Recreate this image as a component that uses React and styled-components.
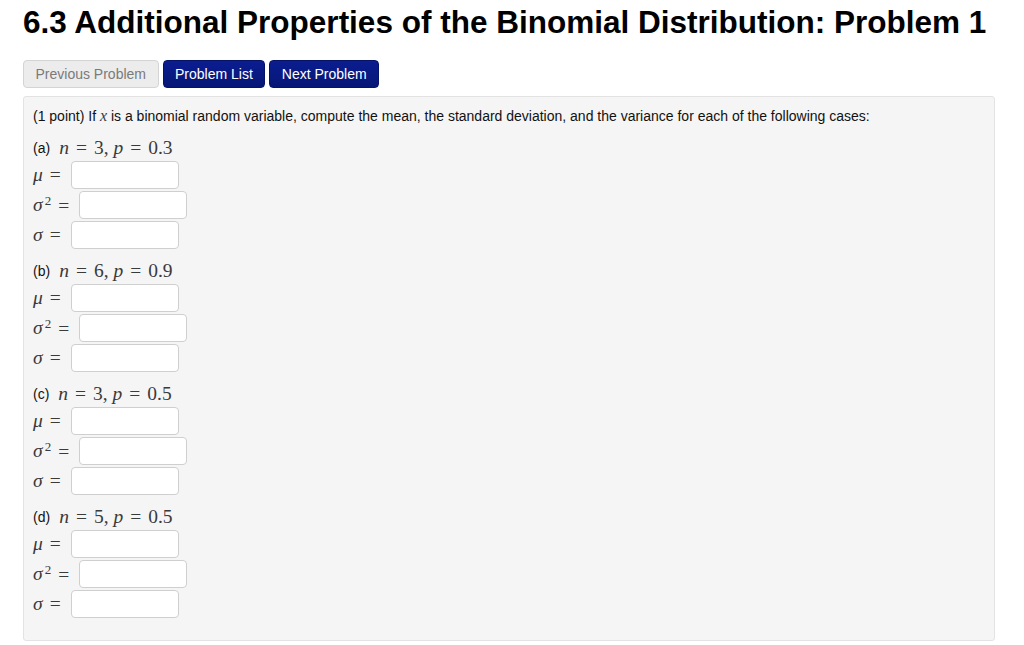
import React from "react";
import styled, { createGlobalStyle } from "styled-components";

const GlobalStyle = createGlobalStyle`
  body {
    margin: 0;
    background: #fff;
    font-family: "Liberation Sans", Arial, sans-serif;
    color: #111;
  }
`;

const Page = styled.div`
  padding: 0 29px 0 23px;
`;

const Title = styled.h1`
  margin: 0;
  padding-top: 4px;
  font-size: 31.5px;
  line-height: 36px;
  font-weight: bold;
  color: #000;
  white-space: nowrap;
`;

const Nav = styled.div`
  display: flex;
  gap: 4px;
  margin-top: 20px;
`;

const NavButton = styled.button`
  height: 28px;
  padding: 0 11.5px;
  font-family: "Liberation Sans", Arial, sans-serif;
  font-size: 14px;
  border-radius: 4px;
  border: 1px solid ${(p) => (p.$primary ? "#051268" : "#d4d4d4")};
  background: ${(p) =>
    p.$primary ? "linear-gradient(#0b1d90, #061676)" : "#ececec"};
  color: ${(p) => (p.$primary ? "#fff" : "#7a7a7a")};
`;

const Panel = styled.div`
  margin-top: 8px;
  background: #f5f5f5;
  border: 1px solid #e3e3e3;
  border-radius: 3px;
  padding: 7px 9px 11px;
  height: 545px;
  box-sizing: border-box;
`;

const Intro = styled.div`
  font-size: 14px;
  line-height: 24px;
  margin-bottom: 8px;
`;

const MathVar = styled.span`
  font-family: "Liberation Serif", "Times New Roman", serif;
  font-style: italic;
  font-size: ${(p) => p.$size || 19.5}px;
  color: #3a3a3a;
`;

const MathText = styled.span`
  font-family: "Liberation Serif", "Times New Roman", serif;
  font-size: 19.5px;
  color: #3a3a3a;
`;

const Rel = styled.span`
  margin: 0 7px;
`;

const Sup = styled.sup`
  font-size: 13px;
  margin-left: 2px;
`;

const Part = styled.div`
  margin-bottom: 9px;
`;

const PartLabel = styled.div`
  font-size: 14px;
  height: 24px;
  display: flex;
  align-items: center;
  gap: 9px;
`;

const Row = styled.div`
  height: 30px;
  display: flex;
  align-items: center;
`;

const Answer = styled.input`
  width: 108px;
  height: 28px;
  box-sizing: border-box;
  margin-left: 3px;
  border: 1px solid #cfcfcf;
  border-radius: 4px;
  background: #fff;
`;

const parts = [
  { key: "a", n: 3, p: "0.3" },
  { key: "b", n: 6, p: "0.9" },
  { key: "c", n: 3, p: "0.5" },
  { key: "d", n: 5, p: "0.5" },
];

function CaseBlock({ part }) {
  return (
    <Part>
      <PartLabel>
        ({part.key})
        <span>
          <MathVar>n</MathVar>
          <MathText>
            <Rel>=</Rel>
            {part.n},{" "}
          </MathText>
          <MathVar>p</MathVar>
          <MathText>
            <Rel>=</Rel>
            {part.p}
          </MathText>
        </span>
      </PartLabel>
      <Row>
        <MathVar>μ</MathVar>
        <MathText>
          <Rel>=</Rel>
        </MathText>
        <Answer />
      </Row>
      <Row>
        <MathVar>σ</MathVar>
        <MathText>
          <Sup>2</Sup>
          <Rel>=</Rel>
        </MathText>
        <Answer />
      </Row>
      <Row>
        <MathVar>σ</MathVar>
        <MathText>
          <Rel>=</Rel>
        </MathText>
        <Answer />
      </Row>
    </Part>
  );
}

export default function App() {
  return (
    <Page>
      <GlobalStyle />
      <Title>6.3 Additional Properties of the Binomial Distribution: Problem 1</Title>
      <Nav>
        <NavButton>Previous Problem</NavButton>
        <NavButton $primary>Problem List</NavButton>
        <NavButton $primary>Next Problem</NavButton>
      </Nav>
      <Panel>
        <Intro>
          (1 point) If <MathVar $size={16}>x</MathVar> is a binomial random
          variable, compute the mean, the standard deviation, and the variance
          for each of the following cases:
        </Intro>
        {parts.map((part) => (
          <CaseBlock key={part.key} part={part} />
        ))}
      </Panel>
    </Page>
  );
}
